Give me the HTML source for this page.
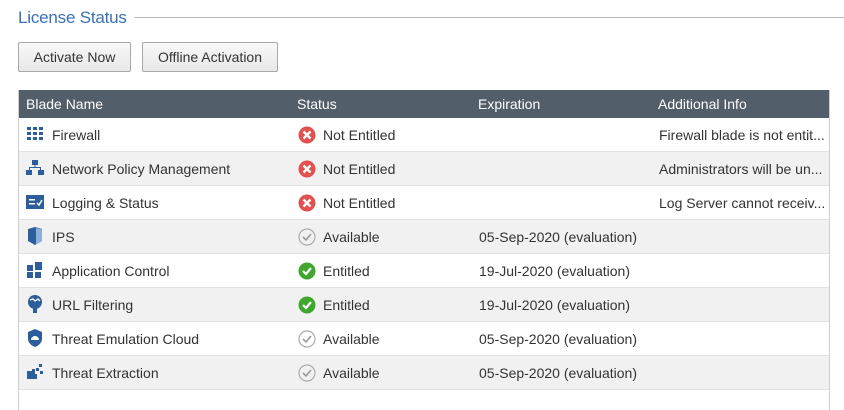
<!DOCTYPE html>
<html><head><style>
*{margin:0;padding:0;box-sizing:border-box}
body{width:844px;height:403px;background:#fff;font-family:"Liberation Sans",sans-serif;font-size:14px;color:#333;position:relative;overflow:hidden}
.title{position:absolute;left:18px;top:8px;font-size:17px;color:#3b6fb6;letter-spacing:-0.2px}
.hr{position:absolute;left:134px;top:17px;width:710px;height:1px;background:#bbb}
.btn{position:absolute;top:42px;height:30px;border:1px solid #a8a8a8;border-radius:2px;background:linear-gradient(#f8f8f8,#e8e8e8);font-size:14px;line-height:28px;text-align:center;color:#333}
.tbl{position:absolute;left:18px;top:90px;width:812px;height:320px;border-left:1px solid #cfcfcf;border-right:1px solid #cfcfcf}
.hd{height:28px;background:#535e6b;color:#fff;position:relative;font-size:14px}
.hd span{position:absolute;top:6px}
.row{height:34px;position:relative;border-bottom:1px solid #e2e2e2}
.row:nth-child(odd){background:#f1f1f1}
.row span{position:absolute;top:9px;white-space:nowrap}
.ic{position:absolute;left:7px;top:7px;width:18px;height:18px}
.st{position:absolute;left:279px;top:8px;width:18px;height:18px}
</style></head><body>
<div class="title">License Status</div>
<div class="hr"></div>
<div class="btn" style="left:18px;width:113px">Activate Now</div>
<div class="btn" style="left:142px;width:136px">Offline Activation</div>
<div class="tbl">
<div class="hd"><span style="left:7px">Blade Name</span><span style="left:278px">Status</span><span style="left:459px">Expiration</span><span style="left:639px">Additional Info</span></div>
<div class="row"><svg class="ic" viewBox="0 0 18 18" fill="#2b5e9a"><rect x="1" y="2" width="4" height="3"/><rect x="7" y="2" width="4" height="3"/><rect x="13" y="2" width="4" height="3"/><rect x="1" y="7" width="4" height="3"/><rect x="7" y="7" width="4" height="3"/><rect x="13" y="7" width="4" height="3"/><rect x="1" y="12" width="4" height="3"/><rect x="7" y="12" width="4" height="3"/><rect x="13" y="12" width="4" height="3"/></svg><span style="left:33px">Firewall</span>
<svg class="st" viewBox="0 0 18 18"><circle cx="9" cy="9" r="8.5" fill="#e2514f"/><path d="M5.5 5.5l7 7M12.5 5.5l-7 7" stroke="#fff" stroke-width="2.4"/></svg><span style="left:304px">Not Entitled</span><span style="left:640px">Firewall blade is not entit...</span></div>
<div class="row"><svg class="ic" viewBox="0 0 18 18" fill="#2b5e9a"><rect x="6" y="1" width="6" height="5"/><rect x="8.5" y="6" width="1" height="3"/><rect x="3" y="8" width="12" height="1"/><rect x="3" y="8" width="1" height="3"/><rect x="14" y="8" width="1" height="3"/><rect x="0" y="11" width="6" height="5"/><rect x="12" y="11" width="6" height="5"/></svg><span style="left:33px">Network Policy Management</span>
<svg class="st" viewBox="0 0 18 18"><circle cx="9" cy="9" r="8.5" fill="#e2514f"/><path d="M5.5 5.5l7 7M12.5 5.5l-7 7" stroke="#fff" stroke-width="2.4"/></svg><span style="left:304px">Not Entitled</span><span style="left:640px">Administrators will be un...</span></div>
<div class="row"><svg class="ic" viewBox="0 0 18 18"><rect x="0" y="2" width="18" height="14" fill="#2b5e9a"/><rect x="3" y="6" width="6" height="1.5" fill="#fff"/><rect x="3" y="10" width="6" height="1.5" fill="#fff"/><path d="M11 10l2 2 3-5" stroke="#fff" stroke-width="1.5" fill="none"/></svg><span style="left:33px">Logging &amp; Status</span>
<svg class="st" viewBox="0 0 18 18"><circle cx="9" cy="9" r="8.5" fill="#e2514f"/><path d="M5.5 5.5l7 7M12.5 5.5l-7 7" stroke="#fff" stroke-width="2.4"/></svg><span style="left:304px">Not Entitled</span><span style="left:640px">Log Server cannot receiv...</span></div>
<div class="row"><svg class="ic" viewBox="0 0 18 18"><path d="M2 2l7-2 7 2v12l-7 4-7-4z" fill="#2b5e9a"/><path d="M10 1l6 1.5v11.5l-6 3.5z" fill="#8fb0d6"/></svg><span style="left:33px">IPS</span>
<svg class="st" viewBox="0 0 18 18"><circle cx="9" cy="9" r="8" fill="none" stroke="#aaa" stroke-width="1.2"/><path d="M5 9l3 3 5-6" stroke="#999" stroke-width="1.6" fill="none"/></svg><span style="left:304px">Available</span><span style="left:460px">05-Sep-2020 (evaluation)</span></div>
<div class="row"><svg class="ic" viewBox="0 0 18 18" fill="#2b5e9a"><rect x="1" y="4" width="6" height="6"/><rect x="9" y="1" width="7" height="8"/><rect x="1" y="11" width="6" height="6"/><rect x="9" y="11" width="6" height="6"/></svg><span style="left:33px">Application Control</span>
<svg class="st" viewBox="0 0 18 18"><circle cx="9" cy="9" r="8.5" fill="#3fa72d"/><path d="M5 9l3 3 5-6" stroke="#fff" stroke-width="2.2" fill="none"/></svg><span style="left:304px">Entitled</span><span style="left:460px">19-Jul-2020 (evaluation)</span></div>
<div class="row"><svg class="ic" viewBox="0 0 18 18" fill="#2b5e9a"><circle cx="9" cy="7" r="7"/><rect x="7" y="13" width="4" height="5"/><path d="M4 5l3-1 2 2 3-2 2 2" stroke="#fff" stroke-width="1.3" fill="none"/></svg><span style="left:33px">URL Filtering</span>
<svg class="st" viewBox="0 0 18 18"><circle cx="9" cy="9" r="8.5" fill="#3fa72d"/><path d="M5 9l3 3 5-6" stroke="#fff" stroke-width="2.2" fill="none"/></svg><span style="left:304px">Entitled</span><span style="left:460px">19-Jul-2020 (evaluation)</span></div>
<div class="row"><svg class="ic" viewBox="0 0 18 18"><path d="M2 3l7-3 7 3v7c0 4-4 7-7 8-3-1-7-4-7-8z" fill="#2b5e9a"/><path d="M5 11a4 4 0 0 1 8 0z" fill="#fff"/></svg><span style="left:33px">Threat Emulation Cloud</span>
<svg class="st" viewBox="0 0 18 18"><circle cx="9" cy="9" r="8" fill="none" stroke="#aaa" stroke-width="1.2"/><path d="M5 9l3 3 5-6" stroke="#999" stroke-width="1.6" fill="none"/></svg><span style="left:304px">Available</span><span style="left:460px">05-Sep-2020 (evaluation)</span></div>
<div class="row"><svg class="ic" viewBox="0 0 18 18" fill="#2b5e9a"><path d="M1 8h5v-2h3v5h2v5h-10z"/><rect x="13" y="1" width="3" height="3"/><rect x="10" y="5" width="3" height="3"/><rect x="14" y="8" width="3" height="3"/></svg><span style="left:33px">Threat Extraction</span>
<svg class="st" viewBox="0 0 18 18"><circle cx="9" cy="9" r="8" fill="none" stroke="#aaa" stroke-width="1.2"/><path d="M5 9l3 3 5-6" stroke="#999" stroke-width="1.6" fill="none"/></svg><span style="left:304px">Available</span><span style="left:460px">05-Sep-2020 (evaluation)</span></div>
</div>
</body></html>
